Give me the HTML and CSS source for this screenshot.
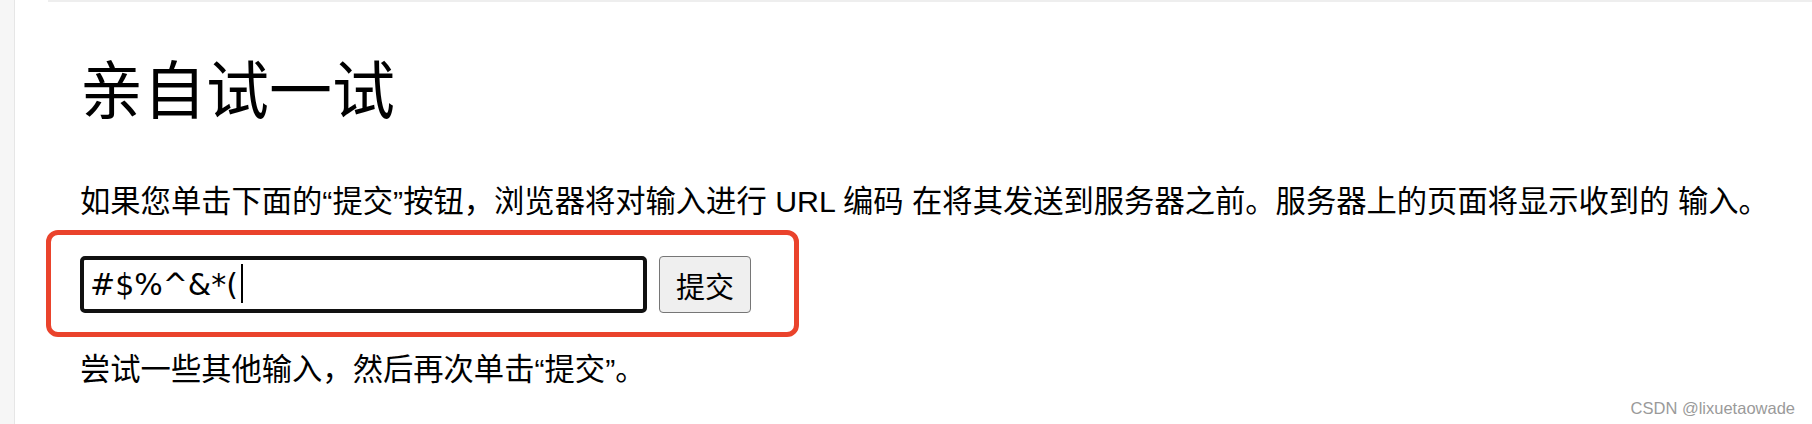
FILE: index.html
```html
<!DOCTYPE html>
<html lang="zh-CN">
<head>
<meta charset="utf-8">
<title>亲自试一试</title>
<link rel="stylesheet" href="styles.css">
</head>
<body>
<div class="page">
  <aside class="rail"></aside>
  <main class="content">
    <h1 class="title">亲自试一试</h1>
    <p class="lead">如果您单击下面的“提交”按钮，浏览器将对输入进行 URL 编码 在将其发送到服务器之前。服务器上的页面将显示收到的 输入。</p>
    <form class="try" onsubmit="return false">
      <input class="field" type="text" name="text" value="#$%^&amp;*(">
      <button class="submit" type="submit">提交</button>
      <span class="caret"></span>
      <span class="mark"></span>
    </form>
    <p class="hint">尝试一些其他输入，然后再次单击“提交”。</p>
  </main>
  <span class="watermark">CSDN @lixuetaowade</span>
</div>
</body>
</html>
```

FILE: styles.css
```css
html, body {
  margin: 0;
  padding: 0;
  background: #ffffff;
}

body {
  font-family: "Liberation Sans", "Noto Sans CJK SC", sans-serif;
  color: #000000;
  overflow: hidden;
}

.page {
  position: relative;
  display: flex;
  height: 424px;
}

.rail {
  flex: 0 0 14px;
  background: #f6f6f6;
  border-right: 1px solid #e6e6e6;
}

.content {
  flex: 1;
  margin-left: 33px;
  padding-left: 32px;
  border-top: 2px solid #eeeeee;
}

.title {
  margin: 52px 0 0 0;
  font-family: "Noto Sans CJK SC", sans-serif;
  font-size: 63px;
  line-height: 63px;
  font-weight: 400;
}

.lead,
.hint {
  font-size: 30.3px;
  line-height: 46px;
  white-space: nowrap;
}

.lead {
  margin: 62px 0 0 0;
}

.try {
  position: relative;
  display: flex;
  align-items: stretch;
  width: max-content;
  margin: 31px 0 0 0;
}

.field {
  box-sizing: border-box;
  width: 567px;
  height: 57px;
  margin: 0;
  padding: 0 6px;
  border: 4px solid #111111;
  border-radius: 5px;
  outline: none;
  font-family: "DejaVu Sans", sans-serif;
  font-size: 30px;
  color: #000000;
  background: #ffffff;
}

.submit {
  box-sizing: border-box;
  width: 92px;
  height: 57px;
  margin: 0 0 0 12px;
  padding: 0;
  border: 1px solid #767676;
  border-radius: 4px;
  background: #efefef;
  font-family: "Noto Sans CJK SC", sans-serif;
  font-size: 29px;
  color: #000000;
}

.caret {
  position: absolute;
  left: 161px;
  top: 8px;
  width: 2px;
  height: 39px;
  background: #000000;
}

.mark {
  position: absolute;
  left: -34px;
  top: -26px;
  width: 753px;
  height: 107px;
  box-sizing: border-box;
  border: 5px solid #ea432c;
  border-radius: 12px;
  pointer-events: none;
}

.hint {
  margin: 34px 0 0 0;
}

.watermark {
  position: absolute;
  right: 17px;
  bottom: 8px;
  font-family: "Liberation Sans", sans-serif;
  font-size: 16.5px;
  line-height: 16px;
  color: #9a9a9a;
}
```
